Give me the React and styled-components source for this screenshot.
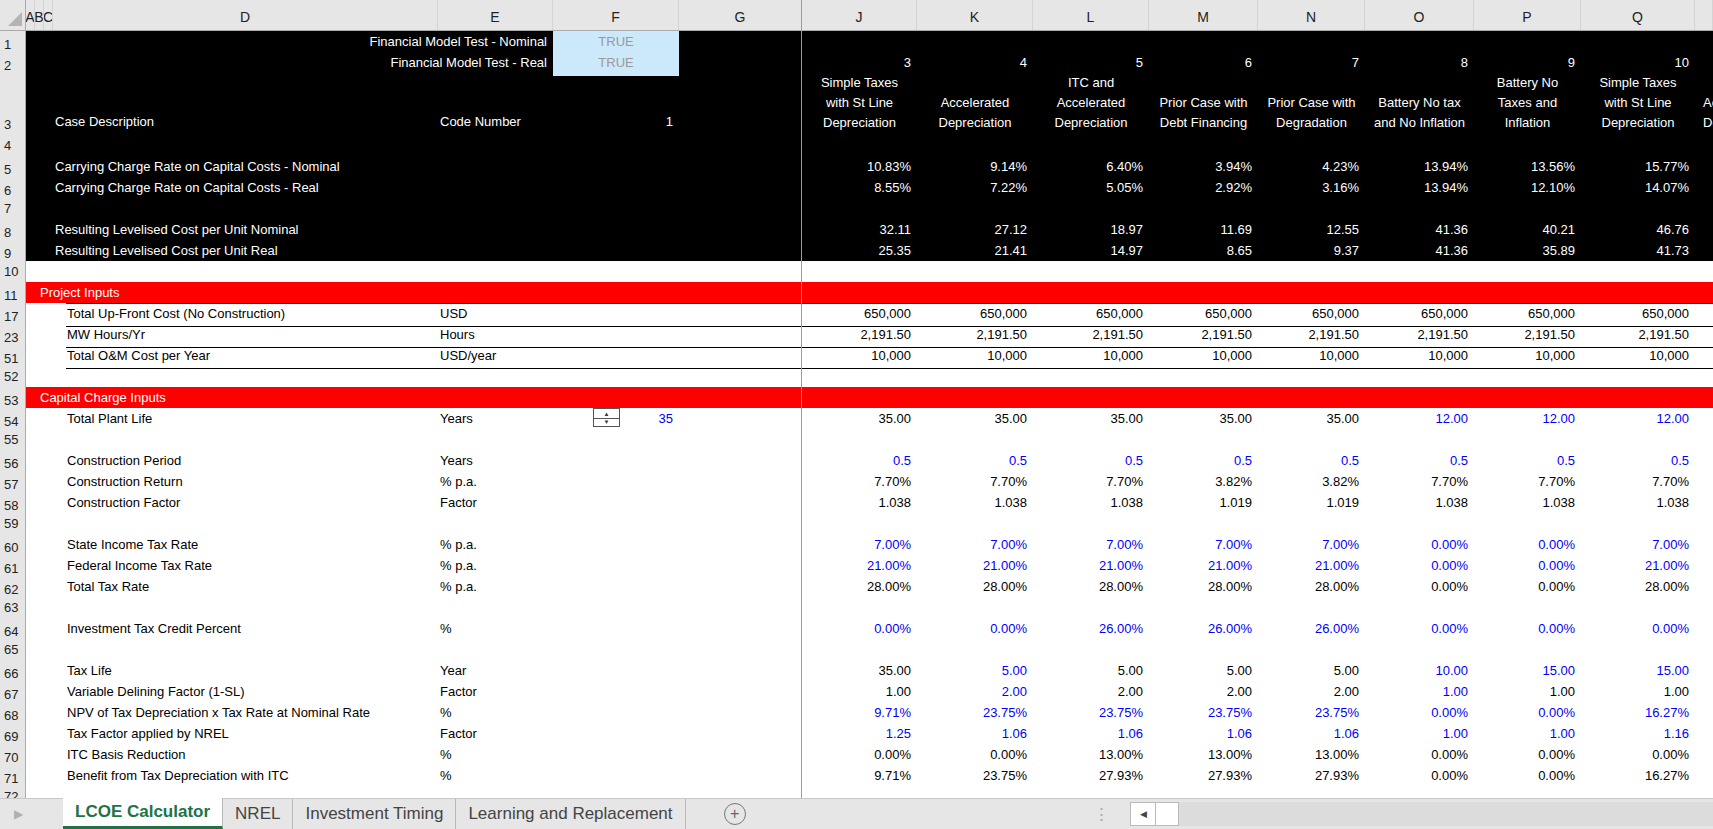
import React from "react";
import styled, { createGlobalStyle } from "styled-components";

const GlobalStyle = createGlobalStyle`
  body { margin: 0; font-family: "Liberation Sans", Arial, sans-serif; font-size: 13px; background: #fff; overflow: hidden; }
`;

const COLS = "26px 9px 9px 9px 385px 115px 126px 123px 115px 116px 116px 109px 107px 109px 107px 114px 1fr";
const BLUE = "#0000ff";

const Sheet = styled.div`
  width: 1713px;
  height: 829px;
  display: flex;
  flex-direction: column;
  overflow: hidden;
`;

const Grid = styled.div`
  flex: 1;
  overflow: hidden;
`;

const Row = styled.div`
  display: grid;
  grid-template-columns: ${COLS};
  height: ${(p) => p.$h || 21}px;
  background: ${(p) => p.$bg || "#fff"};
  color: ${(p) => (p.$bg === "#000" || p.$bg === "#ff0000" ? "#fff" : "#000")};
`;

const HeadRow = styled(Row)`
  height: 31px;
  background: #e6e6e6;
  border-bottom: 1px solid #ababab;
  box-sizing: border-box;
`;

const ColHead = styled.div`
  display: flex;
  align-items: flex-end;
  justify-content: center;
  padding-bottom: 5px;
  font-size: 14px;
  color: #222;
  border-right: 1px solid #d4d4d4;
  overflow: hidden;
  ${(p) => p.$frozen && "border-right: 1px solid #9b9b9b;"}
`;

const Corner = styled.div`
  position: relative;
  border-right: 1px solid #ababab;
  &::after {
    content: "";
    position: absolute;
    right: 3px;
    bottom: 4px;
    border-left: 14px solid transparent;
    border-bottom: 14px solid #b4b4b4;
  }
`;

const RowNum = styled.div`
  background: #e6e6e6;
  color: #222;
  font-size: 13px;
  border-right: 1px solid #ababab;
  display: flex;
  align-items: flex-end;
  padding: 0 0 3px 4px;
  box-sizing: border-box;
`;

const Cell = styled.div`
  display: flex;
  align-items: flex-end;
  justify-content: ${(p) => (p.$right ? "flex-end" : p.$center ? "center" : "flex-start")};
  text-align: ${(p) => (p.$center ? "center" : "left")};
  padding: 0 ${(p) => (p.$right ? 6 : 2)}px 3px ${(p) => p.$indent || 2}px;
  box-sizing: border-box;
  white-space: nowrap;
  color: ${(p) => p.$color || "inherit"};
  background: ${(p) => p.$bg || "transparent"};
  grid-column: ${(p) => p.$span || "auto"};
  position: relative;
  overflow: ${(p) => (p.$clip ? "hidden" : "visible")};
  line-height: 21px;
  ${(p) => p.$frozen && "border-right: 1px solid #9b9b9b;"}
  ${(p) =>
    p.$under &&
    `&::after { content: ""; position: absolute; left: ${p.$under}px; right: 0; bottom: 0; border-bottom: 1.5px solid #000; }`}
  ${(p) =>
    p.$over &&
    `&::before { content: ""; position: absolute; left: ${p.$under || 0}px; right: 0; top: 0; border-top: 1.5px solid #000; }`}
`;

const Wrapped = styled.div`
  width: ${(p) => p.$w}px;
  flex: none;
  white-space: normal;
  text-align: ${(p) => p.$align || "center"};
  line-height: 20px;
`;

const Spinner = styled.div`
  position: absolute;
  left: 40px;
  top: 0;
  width: 27px;
  height: 19px;
  border: 1px solid #555;
  background: #fff;
  box-sizing: border-box;
  display: flex;
  flex-direction: column;
  align-items: center;
  justify-content: center;
  gap: 2px;
  font-size: 6px;
  line-height: 6px;
  color: #333;
  &::before { content: "▲"; }
  &::after { content: "▼"; }
`;

const Divider = styled.span`
  position: absolute;
  left: 0;
  right: 0;
  top: 9px;
  border-top: 1px solid #555;
`;

const TabBar = styled.div`
  height: 30px;
  background: #e6e6e6;
  border-top: 1px solid #c8c8c8;
  display: flex;
  align-items: stretch;
  font-size: 17px;
  color: #444;
`;

const Arrow = styled.div`
  width: 63px;
  flex: none;
  display: flex;
  align-items: center;
  padding-left: 14px;
  box-sizing: border-box;
  color: #b0b0b0;
  font-size: 12px;
`;

const Tab = styled.div`
  padding: 0 12px;
  display: flex;
  align-items: center;
  border-right: 1px solid #b8b8b8;
  ${(p) =>
    p.$active &&
    "background:#fff; color:#217346; font-weight:bold; border-bottom:3px solid #217346; margin-top:-1px;"}
`;

const AddTab = styled.div`
  width: 20px;
  height: 20px;
  margin: auto 0 auto 38px;
  border: 1px solid #777;
  border-radius: 50%;
  display: flex;
  align-items: center;
  justify-content: center;
  font-size: 16px;
  color: #666;
`;

const Scroll = styled.div`
  margin-left: auto;
  width: 620px;
  display: flex;
  align-items: center;
  gap: 20px;
  color: #aaa;
`;

const ScrollTrack = styled.div`
  flex: 1;
  height: 24px;
  background: #dcdcdc;
  display: flex;
  & > span {
    width: 24px;
    background: #fff;
    border: 1px solid #bbb;
    display: flex;
    align-items: center;
    justify-content: center;
    font-size: 9px;
    color: #444;
  }
  & > span + span { width: 22px; border-left: none; }
`;

const COL_LETTERS = ["A", "B", "C", "D", "E", "F", "G", "J", "K", "L", "M", "N", "O", "P", "Q", ""];

const CASES = [
  ["3", "Simple Taxes with St Line Depreciation", 96],
  ["4", "Accelerated Depreciation", 100],
  ["5", "ITC and Accelerated Depreciation", 100],
  ["6", "Prior Case with Debt Financing", 104],
  ["7", "Prior Case with Degradation", 104],
  ["8", "Battery No tax and No Inflation", 96],
  ["9", "Battery No Taxes and Inflation", 82],
  ["10", "Simple Taxes with St Line Depreciation", 96],
];

const B = (v) => ({ v, blue: true });
const rep = (v, n = 8) => Array(n).fill(v);

const TOP = [
  ["5", "Carrying Charge Rate on Capital Costs - Nominal", ["10.83%", "9.14%", "6.40%", "3.94%", "4.23%", "13.94%", "13.56%", "15.77%"]],
  ["6", "Carrying Charge Rate on Capital Costs - Real", ["8.55%", "7.22%", "5.05%", "2.92%", "3.16%", "13.94%", "12.10%", "14.07%"]],
  ["7"],
  ["8", "Resulting Levelised Cost per Unit Nominal", ["32.11", "27.12", "18.97", "11.69", "12.55", "41.36", "40.21", "46.76"]],
  ["9", "Resulting Levelised Cost per Unit Real", ["25.35", "21.41", "14.97", "8.65", "9.37", "41.36", "35.89", "41.73"]],
];

const INPUTS = [
  ["17", "Total Up-Front Cost (No Construction)", "USD", rep("650,000")],
  ["23", "MW Hours/Yr", "Hours", rep("2,191.50")],
  ["51", "Total O&M Cost per Year", "USD/year", rep("10,000")],
];

const CAPITAL = [
  ["54", "Total Plant Life", "Years", [...rep("35.00", 5), ...rep(B("12.00"), 3)], true],
  ["55"],
  ["56", "Construction Period", "Years", rep(B("0.5"))],
  ["57", "Construction Return", "% p.a.", ["7.70%", "7.70%", "7.70%", "3.82%", "3.82%", "7.70%", "7.70%", "7.70%"]],
  ["58", "Construction Factor", "Factor", ["1.038", "1.038", "1.038", "1.019", "1.019", "1.038", "1.038", "1.038"]],
  ["59"],
  ["60", "State Income Tax Rate", "% p.a.", [...rep(B("7.00%"), 5), B("0.00%"), B("0.00%"), B("7.00%")]],
  ["61", "Federal Income Tax Rate", "% p.a.", [...rep(B("21.00%"), 5), B("0.00%"), B("0.00%"), B("21.00%")]],
  ["62", "Total Tax Rate", "% p.a.", [...rep("28.00%", 5), "0.00%", "0.00%", "28.00%"]],
  ["63"],
  ["64", "Investment Tax Credit Percent", "%", ["0.00%", "0.00%", "26.00%", "26.00%", "26.00%", "0.00%", "0.00%", "0.00%"].map(B)],
  ["65"],
  ["66", "Tax Life", "Year", ["35.00", B("5.00"), "5.00", "5.00", "5.00", B("10.00"), B("15.00"), B("15.00")]],
  ["67", "Variable Delining Factor (1-SL)", "Factor", ["1.00", B("2.00"), "2.00", "2.00", "2.00", B("1.00"), "1.00", "1.00"]],
  ["68", "NPV of Tax Depreciation x Tax Rate at Nominal Rate", "%", ["9.71%", "23.75%", "23.75%", "23.75%", "23.75%", "0.00%", "0.00%", "16.27%"].map(B)],
  ["69", "Tax Factor applied by NREL", "Factor", ["1.25", "1.06", "1.06", "1.06", "1.06", "1.00", "1.00", "1.16"].map(B)],
  ["70", "ITC Basis Reduction", "%", ["0.00%", "0.00%", "13.00%", "13.00%", "13.00%", "0.00%", "0.00%", "0.00%"]],
  ["71", "Benefit from Tax Depreciation with ITC", "%", ["9.71%", "23.75%", "27.93%", "27.93%", "27.93%", "0.00%", "0.00%", "16.27%"]],
  ["72"],
];

const Values = ({ vals = [], under, over }) => (
  <>
    {Array.from({ length: 9 }).map((_, i) => {
      const v = vals[i];
      const text = v && typeof v === "object" ? v.v : v;
      return (
        <Cell key={i} $right $clip={i === 8} $color={v && v.blue ? BLUE : undefined} $under={under ? 0.01 : 0} $over={over}>
          {text}
        </Cell>
      );
    })}
  </>
);

const Blank = ({ n, bg }) => (
  <Row $bg={bg}>
    <RowNum>{n}</RowNum>
    <Cell $span="2 / 8" />
    <Cell $frozen />
  </Row>
);

const InputRow = ({ r, first }) => {
  const [n, label, unit, vals, spinner] = r;
  if (!label) return <Blank n={n} />;
  const line = !spinner && INPUTS.includes(r);
  return (
    <Row>
      <RowNum>{n}</RowNum>
      <Cell $span="2 / 5" />
      <Cell $indent={14} $under={line ? 13 : 0} $over={line && first ? 13 : 0}>{label}</Cell>
      <Cell $under={line ? 0.01 : 0} $over={line && first}>{unit}</Cell>
      <Cell $right $color={BLUE} $under={line ? 0.01 : 0} $over={line && first}>
        {spinner && (
          <Spinner>
            <Divider />
          </Spinner>
        )}
        {spinner ? "35" : ""}
      </Cell>
      <Cell $frozen $under={line ? 0.01 : 0} $over={line && first} />
      <Values vals={vals} under={line} over={line && first} />
    </Row>
  );
};

const Section = ({ n, title }) => (
  <Row $bg="#ff0000">
    <RowNum>{n}</RowNum>
    <Cell $span="2 / 8" $indent={14}>{title}</Cell>
    <Cell $frozen />
  </Row>
);

export default function App() {
  return (
    <Sheet>
      <GlobalStyle />
      <Grid>
        <HeadRow>
          <Corner />
          {COL_LETTERS.map((c, i) => (
            <ColHead key={i} $frozen={c === "G"}>{c}</ColHead>
          ))}
        </HeadRow>

        <Row $bg="#000">
          <RowNum>1</RowNum>
          <Cell $span="2 / 7" $right>Financial Model Test - Nominal</Cell>
          <Cell $center $bg="#cce8fb" $color="#9a9a9a">TRUE</Cell>
          <Cell $frozen />
        </Row>
        <Row $bg="#000">
          <RowNum>2</RowNum>
          <Cell $span="2 / 7" $right>Financial Model Test - Real</Cell>
          <Cell $center $bg="#cce8fb" $color="#9a9a9a">TRUE</Cell>
          <Cell $frozen />
          {CASES.map(([num]) => (
            <Cell key={num} $right>{num}</Cell>
          ))}
          <Cell />
        </Row>
        <Row $bg="#000" $h={62}>
          <RowNum>3</RowNum>
          <Cell $span="2 / 5" />
          <Cell>Case Description</Cell>
          <Cell>Code Number</Cell>
          <Cell $right>1</Cell>
          <Cell $frozen />
          {CASES.map(([num, desc, w]) => (
            <Cell key={num} $center style={{ padding: "0 0 2px" }}>
              <Wrapped $w={w}>{desc}</Wrapped>
            </Cell>
          ))}
          <Cell $clip style={{ padding: "0 0 2px 8px" }}>
            <Wrapped $w={100} $align="left">Accelerated Depreciation</Wrapped>
          </Cell>
        </Row>
        <Blank n="4" bg="#000" />
        {TOP.map(([n, label, vals]) =>
          label ? (
            <Row $bg="#000" key={n}>
              <RowNum>{n}</RowNum>
              <Cell $span="2 / 5" />
              <Cell>{label}</Cell>
              <Cell />
              <Cell />
              <Cell $frozen />
              <Values vals={vals} />
            </Row>
          ) : (
            <Blank key={n} n={n} bg="#000" />
          )
        )}
        <Blank n="10" />
        <Section n="11" title="Project Inputs" />
        {INPUTS.map((r, i) => (
          <InputRow key={r[0]} r={r} first={i === 0} />
        ))}
        <Blank n="52" />
        <Section n="53" title="Capital Charge Inputs" />
        {CAPITAL.map((r) => (
          <InputRow key={r[0]} r={r} />
        ))}
      </Grid>

      <TabBar>
        <Arrow>▶</Arrow>
        <Tab $active>LCOE Calculator</Tab>
        <Tab>NREL</Tab>
        <Tab>Investment Timing</Tab>
        <Tab>Learning and Replacement</Tab>
        <AddTab>+</AddTab>
        <Scroll>
          <span>⋮</span>
          <ScrollTrack>
            <span>◀</span>
            <span />
          </ScrollTrack>
        </Scroll>
      </TabBar>
    </Sheet>
  );
}
